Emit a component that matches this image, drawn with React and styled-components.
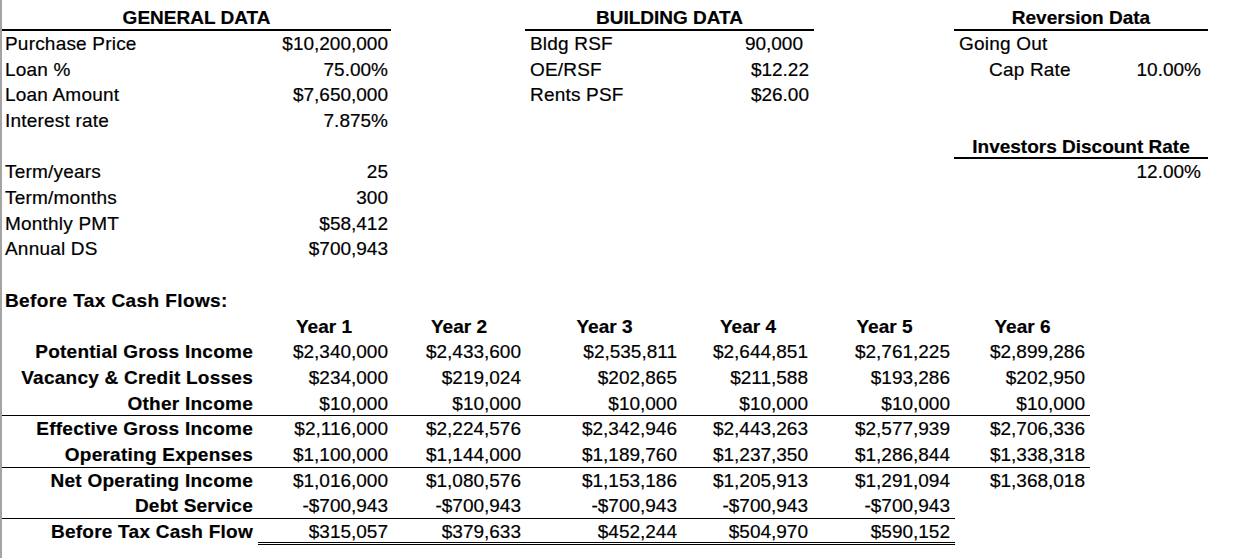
import React from 'react'
import styled, { createGlobalStyle, css } from 'styled-components'

// one spreadsheet row, as measured on the capture
const ROW = 25.7

const generalData = [
  ['Purchase Price', '$10,200,000'],
  ['Loan %', '75.00%'],
  ['Loan Amount', '$7,650,000'],
  ['Interest rate', '7.875%'],
  null,
  ['Term/years', '25'],
  ['Term/months', '300'],
  ['Monthly PMT', '$58,412'],
  ['Annual DS', '$700,943'],
]

const buildingData = [
  ['Bldg RSF', '90,000', 11],
  ['OE/RSF', '$12.22', 5],
  ['Rents PSF', '$26.00', 5],
]

const years = [
  { name: 'Year 1', head: 0, pad: 2, pgi: '$2,340,000', vac: '$234,000', oth: '$10,000', egi: '$2,116,000', opex: '$1,100,000', noi: '$1,016,000', ds: '-$700,943', btcf: '$315,057' },
  { name: 'Year 2', head: 5, pad: 2, pgi: '$2,433,600', vac: '$219,024', oth: '$10,000', egi: '$2,224,576', opex: '$1,144,000', noi: '$1,080,576', ds: '-$700,943', btcf: '$379,633' },
  { name: 'Year 3', head: 7, pad: 2, pgi: '$2,535,811', vac: '$202,865', oth: '$10,000', egi: '$2,342,946', opex: '$1,189,760', noi: '$1,153,186', ds: '-$700,943', btcf: '$452,244' },
  { name: 'Year 4', head: 7, pad: 2, pgi: '$2,644,851', vac: '$211,588', oth: '$10,000', egi: '$2,443,263', opex: '$1,237,350', noi: '$1,205,913', ds: '-$700,943', btcf: '$504,970' },
  { name: 'Year 5', head: 4, pad: 5, pgi: '$2,761,225', vac: '$193,286', oth: '$10,000', egi: '$2,577,939', opex: '$1,286,844', noi: '$1,291,094', ds: '-$700,943', btcf: '$590,152' },
  { name: 'Year 6', head: 0, pad: 5, pgi: '$2,899,286', vac: '$202,950', oth: '$10,000', egi: '$2,706,336', opex: '$1,338,318', noi: '$1,368,018', ds: '', btcf: '' },
]

const cashRows = [
  { label: 'Potential Gross Income', key: 'pgi' },
  { label: 'Vacancy & Credit Losses', key: 'vac' },
  { label: 'Other Income', key: 'oth', rule: 'single' },
  { label: 'Effective Gross Income', key: 'egi' },
  { label: 'Operating Expenses', key: 'opex', rule: 'single' },
  { label: 'Net Operating Income', key: 'noi' },
  { label: 'Debt Service', key: 'ds', rule: 'single' },
  { label: 'Before Tax Cash Flow', key: 'btcf', rule: 'double' },
]

function App() {
  return (
    <>
      <GlobalStyle />
      <Sheet>
        <TopArea>
          <GeneralPanel>
            <Heading>GENERAL DATA</Heading>
            {generalData.map((row, i) =>
              row ? (
                <React.Fragment key={i}>
                  <Label $left={3}>{row[0]}</Label>
                  <Value $pad={3}>{row[1]}</Value>
                </React.Fragment>
              ) : (
                <Blank key={i} />
              )
            )}
          </GeneralPanel>

          <BuildingPanel>
            <Heading>BUILDING DATA</Heading>
            {buildingData.map(([label, value, pad]) => (
              <React.Fragment key={label}>
                <Label $left={5}>{label}</Label>
                <Value $pad={pad}>{value}</Value>
              </React.Fragment>
            ))}
          </BuildingPanel>

          <ReversionPanel>
            <Heading>Reversion Data</Heading>
            <Label $left={5}>Going Out</Label>
            <Value />
            <Label $left={35}>Cap Rate</Label>
            <Value $pad={7}>10.00%</Value>
            <Blank />
            <Blank />
            <Heading>Investors Discount Rate</Heading>
            <Label />
            <Value $pad={7}>12.00%</Value>
          </ReversionPanel>
        </TopArea>

        <CashTitle>Before Tax Cash Flows:</CashTitle>
        <CashGrid>
          <RowLabel />
          {years.map((y) => (
            <YearHead key={y.name} $shift={y.head}>{y.name}</YearHead>
          ))}
          {cashRows.map((row) => (
            <React.Fragment key={row.key}>
              <RowLabel $rule={row.rule === 'single' ? 'single' : undefined}>{row.label}</RowLabel>
              {years.map((y) => (
                <Value key={y.name} $pad={y.pad} $rule={y[row.key] ? row.rule : undefined}>
                  {y[row.key]}
                </Value>
              ))}
            </React.Fragment>
          ))}
        </CashGrid>
      </Sheet>
    </>
  )
}

export default App

const GlobalStyle = createGlobalStyle`
  html, body {
    margin: 0;
    padding: 0;
    background: #ffffff;
  }
  body {
    font-family: "Liberation Sans", Arial, sans-serif;
    color: #000000;
  }
`

const Sheet = styled.div`
  width: 1252px;
  height: 558px;
  box-sizing: border-box;
  padding-top: 5.3px;
  border-left: 2px solid #a4a4a4;
  font-size: 19px;
  -webkit-text-stroke: 0.2px #000;
  overflow: hidden;
`

const TopArea = styled.div`
  display: grid;
  grid-template-columns: 389px 134px 289px 140px 254px;
  align-items: start;
`

const Panel = styled.section`
  display: grid;
  grid-auto-rows: ${ROW}px;
`

const GeneralPanel = styled(Panel)`
  grid-column: 1;
  grid-template-columns: 256px 133px;
`

const BuildingPanel = styled(Panel)`
  grid-column: 3;
  grid-template-columns: 150px 139px;
`

const ReversionPanel = styled(Panel)`
  grid-column: 5;
  grid-template-columns: 134px 120px;
`

const Heading = styled.div`
  grid-column: 1 / -1;
  box-sizing: border-box;
  height: ${ROW}px;
  line-height: ${ROW}px;
  border-bottom: 2.5px solid #000;
  font-weight: 700;
  text-align: center;
  white-space: nowrap;
`

const Cell = styled.div`
  box-sizing: border-box;
  height: ${ROW}px;
  line-height: ${ROW}px;
  white-space: nowrap;
  ${(p) => p.$rule === 'single' && css`border-bottom: 1px solid #000;`}
  ${(p) => p.$rule === 'double' && css`border-bottom: 3px double #000;`}
`

const Blank = styled(Cell)`
  grid-column: 1 / -1;
`

const Label = styled(Cell)`
  padding-left: ${(p) => p.$left || 0}px;
  letter-spacing: 0.2px;
`

const Value = styled(Cell)`
  text-align: right;
  padding-right: ${(p) => p.$pad ?? 2}px;
  letter-spacing: 0;
`

const CashTitle = styled.div`
  margin-top: ${ROW}px;
  height: ${ROW}px;
  line-height: ${ROW}px;
  padding-left: 3px;
  font-weight: 700;
  letter-spacing: 0.4px;
  white-space: nowrap;
`

const CashGrid = styled.div`
  display: grid;
  grid-template-columns: 256px 132px 133px 156px 131px 145px 135px;
  grid-auto-rows: ${ROW}px;
`

const RowLabel = styled(Cell)`
  text-align: right;
  padding-right: 5px;
  font-weight: 700;
  letter-spacing: 0.25px;
`

const YearHead = styled(Cell)`
  text-align: center;
  padding-left: ${(p) => p.$shift}px;
  font-weight: 700;
`
